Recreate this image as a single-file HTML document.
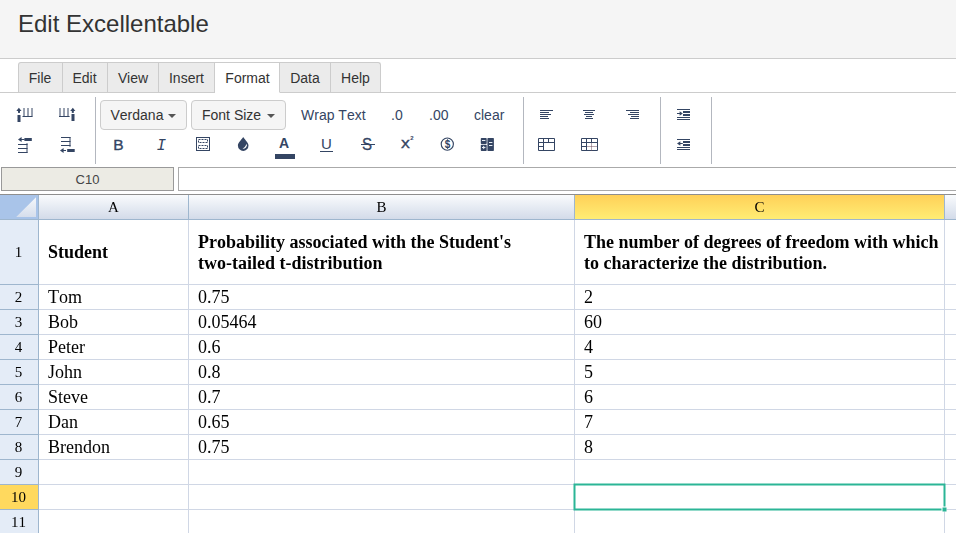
<!DOCTYPE html>
<html lang="en">
<head>
<meta charset="utf-8">
<title>Edit Excellentable</title>
<style>
*{box-sizing:border-box;margin:0;padding:0}
html,body{width:956px;height:533px;overflow:hidden;background:#fff}
body{font-family:"Liberation Sans",Arial,sans-serif;color:#333;position:relative}
.abs{position:absolute}
#hdr{left:0;top:0;width:956px;height:59px;background:#f5f5f5;border-bottom:1px solid #ccc}
#title{left:18px;top:10px;font-size:24px;line-height:28px;color:#333;white-space:nowrap}
#tabline{left:0;top:92px;width:956px;height:1px;background:#ccc}
#tabs{left:18px;top:62px;height:31px;display:flex;border:1px solid #ccc;border-bottom:none;border-radius:3px 3px 0 0;background:#ebebeb;overflow:hidden}
#tabs div{height:30px;line-height:30px;font-size:14px;color:#333;text-align:center;border-right:1px solid #ccc;border-bottom:1px solid #ccc}
#tabs div:last-child{border-right:none}
#tabs div.act{background:#fff;border-bottom:1px solid #fff}
#tbline{left:0;top:167px;width:956px;height:1px;background:#ccc}
.vsep{width:1px;background:#b3b7bf;top:97px;height:67px}
.btn{font-kerning:none;top:100px;height:30px;border:1px solid #ccc;border-radius:4px;background:#f5f5f5;font-size:14px;line-height:28px;color:#333;white-space:nowrap;padding-left:10px}
.caret{display:inline-block;width:0;height:0;border-left:4px solid transparent;border-right:4px solid transparent;border-top:4px solid #555;vertical-align:middle;margin-left:6px}
.tt{font-size:14px;line-height:16px;color:#344563;white-space:nowrap;font-kerning:none}
.ic{width:20px;height:20px}
#namebox{left:1px;top:167px;width:173px;height:24px;background:#ecebe4;border:1px solid #999;font-size:13px;line-height:23.5px;text-align:center;color:#444}
#fx{left:178px;top:167px;width:790px;height:24px;background:#fff;border:1px solid #aaa}
#grid{font-kerning:none;will-change:opacity;opacity:.999;left:0;top:194px;width:956px;height:339px;border-top:1px solid #8e8e8e;overflow:hidden;font-family:"Liberation Serif","Times New Roman",serif;color:#000}
.ch{top:0;height:25px;background:linear-gradient(#f9fbfd,#d3dbe9);border-right:1px solid #9eb6ce;border-bottom:1px solid #9eb6ce;font-size:15px;line-height:24px;text-align:center}
.ch.sel{background:linear-gradient(#ffd058,#ffed74)}
.rh{left:0;width:39px;padding-right:1px;background:#e4ecf7;border-right:1px solid #9eb6ce;border-bottom:1px solid #9eb6ce;font-size:15px;text-align:center}
.rh.sel{background:#ffd95e}
.g{display:block;will-change:transform}
.c{border-right:1px solid #d0d7e5;border-bottom:1px solid #d0d7e5;font-size:18px;padding-left:9px;white-space:nowrap;overflow:hidden}
.c.b{font-weight:bold;font-size:18px;line-height:21px;white-space:nowrap;display:flex;align-items:center}
</style>
</head>
<body>
<div id="hdr" class="abs"></div>
<div id="title" class="abs">Edit Excellentable</div>

<div id="tabline" class="abs"></div>
<div id="tabs" class="abs">
<div style="width:44px;padding-right:1px">File</div><div style="width:45px;padding-right:1px">Edit</div><div style="width:51px">View</div><div style="width:56px">Insert</div><div class="act" style="width:65px;padding-left:1px">Format</div><div style="width:51px">Data</div><div style="width:49px">Help</div>
</div>

<div id="toolbar">
<svg class="abs" style="left:0;top:93px" width="956" height="74" viewBox="0 93 956 74" fill="none" stroke="#344563" stroke-width="1" shape-rendering="auto">
<!-- icon 1: insert row above -->
<g>
<path d="M16.3 110.9h5.2l-2.6-3.1z" fill="#344563" stroke="none"/><rect x="18" y="110.5" width="2" height="2.4" fill="#344563" stroke="none"/>
<rect x="17.5" y="115" width="3" height="7" fill="#344563" stroke="none"/>
<path d="M24 108v8.5M28 108v8.5M32 108v8.5M22.5 116.5h10"/>
</g>
<!-- icon 2 -->
<g>
<path d="M70.2 110.9h5.2l-2.6-3.1z" fill="#344563" stroke="none"/><rect x="71.8" y="110.5" width="2" height="2.4" fill="#344563" stroke="none"/>
<rect x="71.5" y="114" width="3" height="7" fill="#344563" stroke="none"/>
<path d="M60 108v8.5M64 108v8.5M68 108v8.5M59 116.5h10.6"/>
</g>
<!-- icon 3 -->
<g>
<path d="M21.6 137v5l-3.6-2.5z" fill="#344563" stroke="none"/><path d="M21 139.5h3.6"/>
<rect x="24.4" y="138" width="7.4" height="3" fill="#344563" stroke="none"/>
<path d="M18 144.5h9.5M18 148.5h9.5M18 152.5h9.5M27 143.2v9.8"/>
</g>
<!-- icon 4 -->
<g>
<path d="M63.6 148v5l-3.6-2.5z" fill="#344563" stroke="none"/><path d="M63 150.500h3"/>
<rect x="67.2" y="149" width="7.5" height="3" fill="#344563" stroke="none"/>
<path d="M61 137.500h9.500M61 141.500h9.500M61 145.500h9.500M70 137v9.800"/>
</g>
</svg>
<div class="abs vsep" style="left:95px"></div>
<div class="abs btn" style="left:100px;width:87px;padding-left:9.5px">Verdana<span class="caret" style="margin-left:4.5px"></span></div>
<div class="abs btn" style="left:191px;width:95px">Font Size<span class="caret"></span></div>
<div class="abs tt" style="left:301px;top:107px">Wrap Text</div>
<div class="abs tt" style="left:391px;top:107px">.0</div>
<div class="abs tt" style="left:429px;top:107px">.00</div>
<div class="abs tt" style="left:474px;top:107px">clear</div>
<div class="abs tt" style="left:113.3px;top:135.7px;font-size:15.5px;line-height:18px;-webkit-text-stroke:.35px #344563">B</div>
<div class="abs tt" style="left:156.5px;top:137px;font-family:'Liberation Mono',monospace;font-style:italic;font-size:16px;line-height:18px">I</div>
<div class="abs tt" style="left:279px;top:135px;font-weight:bold;font-size:14px">A</div>
<div class="abs" style="left:275px;top:154px;width:20px;height:5px;background:#344563"></div>
<div class="abs tt" style="left:321px;top:136px;font-size:15px;width:11px;text-align:center">U</div><div class="abs" style="left:320px;top:151px;width:13px;height:1px;background:#344563"></div>
<div class="abs tt" style="left:362.4px;top:135.8px;font-size:16px;line-height:18px;-webkit-text-stroke:.3px #344563"><span style="display:inline-block;transform:scaleX(.94);transform-origin:0 0">S</span></div><div class="abs" style="left:361px;top:144px;width:14px;height:1px;background:#344563"></div>
<div class="abs tt" style="left:401.2px;top:133.6px;font-size:14.5px;line-height:18px;-webkit-text-stroke:.3px #344563"><span style="display:inline-block;transform:scaleX(1.22);transform-origin:0 0">x</span><span style="font-size:6px;position:relative;top:-7.5px;left:1.9px;font-weight:bold;-webkit-text-stroke:0">2</span></div>
<div class="abs tt" style="left:444.7px;top:138.5px;font-size:10px;line-height:11px;font-weight:bold">$</div>
<svg class="abs" style="left:180px;top:125px" width="340" height="40" viewBox="180 125 340 40" fill="none" stroke="#344563" stroke-width="1">
<!-- border icon -->
<rect x="196.5" y="137.5" width="13" height="13"/>
<rect x="198.5" y="139.5" width="9" height="3" stroke-dasharray="2 1"/>
<rect x="198.5" y="145.5" width="9" height="3" stroke-dasharray="2 1"/>
<!-- drop -->
<path d="M243.2 137C241 140.2 237.9 143 237.9 145.6a5.3 5.3 0 0 0 10.6 0C248.5 143 245.4 140.2 243.2 137z" fill="#344563" stroke="none"/>
<path d="M246.8 143.8A3.9 3.9 0 0 1 242.5 148.7A10 10 0 0 0 246.8 143.8z" fill="#fff" stroke="none"/>
<!-- dollar circle -->
<circle cx="447.3" cy="144.100" r="6.100" stroke-width="1.150"/>
<!-- calc -->
<path d="M447.500 139.3v2M447.500 146.700v2" stroke-width="1"/>
<rect x="480.8" y="138" width="5.9" height="6" rx="0.7" fill="#344563" stroke="none"/>
<rect x="480.8" y="144.7" width="5.9" height="6.3" rx="0.7" fill="#344563" stroke="none"/>
<rect x="487.4" y="138" width="6.5" height="13" rx="0.7" fill="#344563" stroke="none"/>
<path d="M482 140.5h3.4M482 147.5h3.4M483.7 145.9v3.2M489 142.5h3.4M489 145.5h3.4" stroke="#e8edf3" stroke-width="1"/>
</svg>
<div class="abs vsep" style="left:523px"></div>
<svg class="abs" style="left:530px;top:100px" width="190" height="60" viewBox="530 100 190 60" fill="none" stroke="#344563" stroke-width="1">
<!-- align left -->
<path d="M540 110.5h13M540 112.5h9M540 114.5h11M540 116.5h8M540 118.5h9"/>
<!-- align center -->
<path d="M583 110.5h12M585 112.5h8M584 114.5h10M586 116.5h6M585 118.5h8"/>
<!-- align right -->
<path d="M626 110.5h13M630 112.5h9M628 114.5h11M631 116.5h8M630 118.5h9"/>
<!-- merge icons -->
<path d="M538.5 138.5h16v12h-16zM538.5 142.5h16M538.5 146.5h5M543.5 138.5v12M548.5 138.5v4"/>
<path d="M581.5 138.5h16v12h-16zM581.5 142.5h16M581.5 146.5h5M586.5 138.5v12M591.5 138.5v4"/>
<path d="M587.5 146.5h10M591.5 143.5v7" stroke="#6b4a5c" stroke-dasharray="1 1"/>
<!-- indent -->
<path d="M677 109.5h13M677 117.5h13M677 119.5h13"/>
<path d="M683 111h7v2h-7zM683 114h7v2h-7z" fill="#344563" stroke="none"/>
<path d="M677 113.5h4"/><path d="M679.6 111.2l3.2 2.3-3.2 2.3z" fill="#344563" stroke="none"/>
<!-- outdent -->
<path d="M677 139.5h13M677 147.5h13M677 149.5h13"/>
<path d="M683 141h7v2h-7zM683 144h7v2h-7z" fill="#344563" stroke="none"/>
<path d="M679 143.5h3.8"/><path d="M680.4 141.2l-3.4 2.3 3.4 2.3z" fill="#344563" stroke="none"/>
</svg>
<div class="abs vsep" style="left:660px"></div>
<div class="abs vsep" style="left:711px"></div>
</div>

<div id="namebox" class="abs">C10</div>
<div id="fx" class="abs"></div>

<div id="grid" class="abs">
<div class="abs" style="left:0;top:0;width:39px;height:25px;background:#a9c4e9;border-right:1px solid #9eb6ce;border-bottom:1px solid #9eb6ce"><svg class="abs" style="left:0;top:0" width="38" height="24"><defs><linearGradient id="cg" x1="0" y1="0" x2="0" y2="1"><stop offset="0" stop-color="#f4f7fb"/><stop offset="1" stop-color="#d6deec"/></linearGradient></defs><path d="M36 2.300v19.700H16.200z" fill="url(#cg)"/></svg></div>
<div class="abs ch" style="left:39px;width:150px"><span class="g">A</span></div>
<div class="abs ch" style="left:189px;width:386px"><span class="g">B</span></div>
<div class="abs ch sel" style="left:575px;width:370px"><span class="g">C</span></div>
<div class="abs ch" style="left:945px;width:20px"></div>
<div class="abs rh" style="top:25px;height:65px;line-height:64px"><span class="g">1</span></div>
<div class="abs c b" style="left:39px;top:25px;width:150px;height:65px;line-height:21px">Student</div>
<div class="abs c b" style="left:189px;top:25px;width:386px;height:65px;line-height:21px;padding-top:2px">Probability associated with the Student's<br>two-tailed t-distribution</div>
<div class="abs c b" style="left:575px;top:25px;width:370px;height:65px;line-height:21px;padding-top:2px">The number of degrees of freedom with which<br>to characterize the distribution.</div>
<div class="abs c b" style="left:945px;top:25px;width:20px;height:65px;line-height:21px"></div>
<div class="abs rh" style="top:90px;height:25px;line-height:24px"><span class="g">2</span></div>
<div class="abs c" style="left:39px;top:90px;width:150px;height:25px;line-height:24px">Tom</div>
<div class="abs c" style="left:189px;top:90px;width:386px;height:25px;line-height:24px">0.75</div>
<div class="abs c" style="left:575px;top:90px;width:370px;height:25px;line-height:24px">2</div>
<div class="abs c" style="left:945px;top:90px;width:20px;height:25px;line-height:24px"></div>
<div class="abs rh" style="top:115px;height:25px;line-height:24px"><span class="g">3</span></div>
<div class="abs c" style="left:39px;top:115px;width:150px;height:25px;line-height:24px">Bob</div>
<div class="abs c" style="left:189px;top:115px;width:386px;height:25px;line-height:24px">0.05464</div>
<div class="abs c" style="left:575px;top:115px;width:370px;height:25px;line-height:24px">60</div>
<div class="abs c" style="left:945px;top:115px;width:20px;height:25px;line-height:24px"></div>
<div class="abs rh" style="top:140px;height:25px;line-height:24px"><span class="g">4</span></div>
<div class="abs c" style="left:39px;top:140px;width:150px;height:25px;line-height:24px">Peter</div>
<div class="abs c" style="left:189px;top:140px;width:386px;height:25px;line-height:24px">0.6</div>
<div class="abs c" style="left:575px;top:140px;width:370px;height:25px;line-height:24px">4</div>
<div class="abs c" style="left:945px;top:140px;width:20px;height:25px;line-height:24px"></div>
<div class="abs rh" style="top:165px;height:25px;line-height:24px"><span class="g">5</span></div>
<div class="abs c" style="left:39px;top:165px;width:150px;height:25px;line-height:24px">John</div>
<div class="abs c" style="left:189px;top:165px;width:386px;height:25px;line-height:24px">0.8</div>
<div class="abs c" style="left:575px;top:165px;width:370px;height:25px;line-height:24px">5</div>
<div class="abs c" style="left:945px;top:165px;width:20px;height:25px;line-height:24px"></div>
<div class="abs rh" style="top:190px;height:25px;line-height:24px"><span class="g">6</span></div>
<div class="abs c" style="left:39px;top:190px;width:150px;height:25px;line-height:24px">Steve</div>
<div class="abs c" style="left:189px;top:190px;width:386px;height:25px;line-height:24px">0.7</div>
<div class="abs c" style="left:575px;top:190px;width:370px;height:25px;line-height:24px">6</div>
<div class="abs c" style="left:945px;top:190px;width:20px;height:25px;line-height:24px"></div>
<div class="abs rh" style="top:215px;height:25px;line-height:24px"><span class="g">7</span></div>
<div class="abs c" style="left:39px;top:215px;width:150px;height:25px;line-height:24px">Dan</div>
<div class="abs c" style="left:189px;top:215px;width:386px;height:25px;line-height:24px">0.65</div>
<div class="abs c" style="left:575px;top:215px;width:370px;height:25px;line-height:24px">7</div>
<div class="abs c" style="left:945px;top:215px;width:20px;height:25px;line-height:24px"></div>
<div class="abs rh" style="top:240px;height:25px;line-height:24px"><span class="g">8</span></div>
<div class="abs c" style="left:39px;top:240px;width:150px;height:25px;line-height:24px">Brendon</div>
<div class="abs c" style="left:189px;top:240px;width:386px;height:25px;line-height:24px">0.75</div>
<div class="abs c" style="left:575px;top:240px;width:370px;height:25px;line-height:24px">8</div>
<div class="abs c" style="left:945px;top:240px;width:20px;height:25px;line-height:24px"></div>
<div class="abs rh" style="top:265px;height:25px;line-height:24px"><span class="g">9</span></div>
<div class="abs c" style="left:39px;top:265px;width:150px;height:25px;line-height:24px"></div>
<div class="abs c" style="left:189px;top:265px;width:386px;height:25px;line-height:24px"></div>
<div class="abs c" style="left:575px;top:265px;width:370px;height:25px;line-height:24px"></div>
<div class="abs c" style="left:945px;top:265px;width:20px;height:25px;line-height:24px"></div>
<div class="abs rh sel" style="top:290px;height:25px;line-height:24px"><span class="g">10</span></div>
<div class="abs c" style="left:39px;top:290px;width:150px;height:25px;line-height:24px"></div>
<div class="abs c" style="left:189px;top:290px;width:386px;height:25px;line-height:24px"></div>
<div class="abs c" style="left:575px;top:290px;width:370px;height:25px;line-height:24px"></div>
<div class="abs c" style="left:945px;top:290px;width:20px;height:25px;line-height:24px"></div>
<div class="abs rh" style="top:315px;height:25px;line-height:24px"><span class="g">11</span></div>
<div class="abs c" style="left:39px;top:315px;width:150px;height:25px;line-height:24px"></div>
<div class="abs c" style="left:189px;top:315px;width:386px;height:25px;line-height:24px"></div>
<div class="abs c" style="left:575px;top:315px;width:370px;height:25px;line-height:24px"></div>
<div class="abs c" style="left:945px;top:315px;width:20px;height:25px;line-height:24px"></div>
<svg class="abs" style="left:560px;top:280px" width="396" height="50" viewBox="560 280 396 50"><rect x="574.5" y="289.5" width="370" height="25" fill="none" stroke="#2bb596" stroke-width="2"/><rect x="941.5" y="311.5" width="5" height="5" fill="#fff"/><rect x="942.5" y="312.5" width="4" height="4" fill="#2bb596"/></svg>
</div>
</body>
</html>
